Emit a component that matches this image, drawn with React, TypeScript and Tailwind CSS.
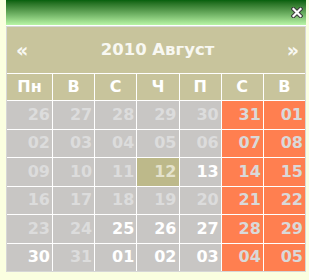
type Kind = 'off' | 'on' | 'wk' | 'today'

interface Day {
  n: string
  kind: Kind
}

const weekDays = ['Пн', 'В', 'С', 'Ч', 'П', 'С', 'В']

const d = (n: string, kind: Kind): Day => ({ n, kind })

const weeks: Day[][] = [
  [d('26', 'off'), d('27', 'off'), d('28', 'off'), d('29', 'off'), d('30', 'off'), d('31', 'wk'), d('01', 'wk')],
  [d('02', 'off'), d('03', 'off'), d('04', 'off'), d('05', 'off'), d('06', 'off'), d('07', 'wk'), d('08', 'wk')],
  [d('09', 'off'), d('10', 'off'), d('11', 'off'), d('12', 'today'), d('13', 'on'), d('14', 'wk'), d('15', 'wk')],
  [d('16', 'off'), d('17', 'off'), d('18', 'off'), d('19', 'off'), d('20', 'off'), d('21', 'wk'), d('22', 'wk')],
  [d('23', 'off'), d('24', 'off'), d('25', 'on'), d('26', 'on'), d('27', 'on'), d('28', 'wk'), d('29', 'wk')],
  [d('30', 'on'), d('31', 'off'), d('01', 'on'), d('02', 'on'), d('03', 'on'), d('04', 'wk'), d('05', 'wk')],
]

function cellClass(kind: Kind) {
  switch (kind) {
    case 'wk':
      return 'bg-[#ff7f50] text-[#d9d9d9]'
    case 'today':
      return 'bg-[#bdb98a] text-[#e4e2cc]'
    case 'on':
      return 'bg-[#c8c6c4] text-white'
    default:
      return 'bg-[#c8c6c4] text-[#dcdcdc]'
  }
}

function CloseIcon() {
  return (
    <svg width="12" height="11" viewBox="0 0 12 11">
      <path d="M2.5 2 L9.5 9 M9.5 2 L2.5 9" stroke="#3a3a3a" strokeWidth="4.2" strokeLinecap="square" />
      <path d="M2.5 2 L9.5 9 M9.5 2 L2.5 9" stroke="#fff" strokeWidth="2.2" strokeLinecap="square" />
    </svg>
  )
}

export default function App() {
  return (
    <div className="min-h-[280px] w-[309px] bg-[#fbffe0] font-['DejaVu_Sans',sans-serif] font-bold">
      <div className="ml-[6px] w-[300px]">
        {/* title bar */}
        <div className="flex h-[25px] items-end justify-end bg-gradient-to-b from-[#05600c] to-[#b8f5a6] pb-[7px] pr-[3px]">
          <CloseIcon />
        </div>
        <div className="h-px bg-white" />

        {/* calendar */}
        <div className="border border-[#d6d6d6] bg-white">
          <div className="flex h-[46px] items-center justify-between bg-[#c8c49c] pl-[9px] pr-[6px] text-[#f8f8f2]">
            <span className="text-[19px]">«</span>
            <span className="pt-px text-[16.5px]">2010 Август</span>
            <span className="text-[19px]">»</span>
          </div>
          <div className="mt-px grid grid-cols-[45px_repeat(6,1fr)] gap-px">
            {weekDays.map((w, i) => (
              <div key={i} className="flex h-[26px] items-center justify-center bg-[#c8c49c] text-[16px] text-white">
                {w}
              </div>
            ))}
          </div>
          <div className="mt-px grid grid-cols-[45px_repeat(6,1fr)] gap-px">
            {weeks.flat().map((day, i) => (
              <div
                key={i}
                className={`flex h-[27.5px] items-center justify-end pr-[2px] text-[16px] ${cellClass(day.kind)}`}
              >
                {day.n}
              </div>
            ))}
          </div>
        </div>
      </div>
    </div>
  )
}
